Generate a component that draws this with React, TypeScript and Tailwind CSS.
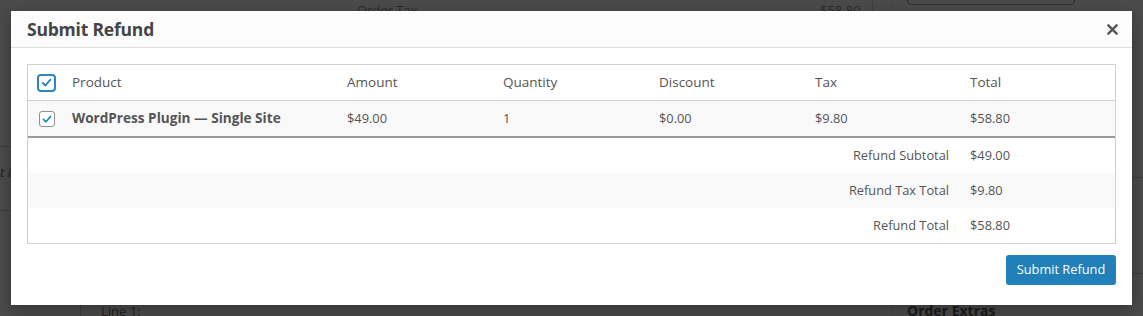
import React from "react";

const font = { fontFamily: '"Open Sans", "Noto Sans", sans-serif' };

function Check({ className }: { className?: string }) {
  return (
    <svg viewBox="0 0 20 20" className={className} fill="none">
      <path d="M5 10.5 L8.6 14 L15.2 6.2" stroke="currentColor" strokeWidth="2.4" strokeLinecap="round" strokeLinejoin="round" />
    </svg>
  );
}

export default function App() {
  const cols = ["Amount", "Quantity", "Discount", "Tax", "Total"];
  const vals = ["$49.00", "1", "$0.00", "$9.80", "$58.80"];
  const widths = ["w-[156px]", "w-[156px]", "w-[156px]", "w-[155px]", "flex-1"];
  return (
    <div className="relative w-[1143px] h-[316px] overflow-hidden bg-[#4b4b4b]" style={font}>
      {/* dimmed underlying page hints */}
      <div className="absolute left-[907px] top-[-10px] w-[168px] h-[15px] rounded-[4px] border border-[#2f2f2f]" />
      <div className="absolute left-[872px] top-0 w-px h-[22px] bg-[#3e3e3e]" />
      <div className="absolute left-[892px] top-0 w-px h-[316px] bg-[#454545]" />
      <div className="absolute left-0 top-[146px] w-[11px] h-px bg-[#3e3e3e]" />
      <div className="absolute left-0 top-[210px] w-[11px] h-px bg-[#3e3e3e]" />
      <div className="absolute left-[80px] top-[305px] w-px h-[11px] bg-[#3e3e3e]" />
      <div className="absolute left-[1132px] top-[177px] w-[11px] h-px bg-[#3e3e3e]" />
      <div className="absolute left-[1132px] top-[273px] w-[11px] h-px bg-[#3e3e3e]" />
      <div className="absolute left-[101px] top-[305px] text-[13px] leading-none text-[#1e1e1e]">Line 1:</div>
      <div className="absolute left-[907px] top-[304px] text-[14px] leading-none font-bold text-[#1a1a1a]">Order Extras</div>
      <div className="absolute left-0 top-[166px] text-[13px] leading-none italic text-[#1e1e1e]">t i</div>
      <div className="absolute left-[357px] top-[4px] text-[13px] text-[#2a2a2a] leading-none">Order Tax</div>
      <div className="absolute left-[820px] top-[4px] text-[13px] text-[#2a2a2a] leading-none">$58.80</div>

      {/* modal */}
      <div className="absolute left-[11px] top-[11px] w-[1121px] h-[294px] bg-white flex flex-col shadow-[0_5px_15px_rgba(0,0,0,0.3)]">
        <div className="h-[37px] bg-[#fcfcfc] border-b border-[#dddddd] flex items-center justify-between pl-[16px] pr-[14px]">
          <div className="text-[17.5px] font-bold text-[#444444] tracking-[-0.2px]">Submit Refund</div>
          <svg viewBox="0 0 12 12" className="w-[11px] h-[11px] text-[#555555]">
            <path d="M1.5 1.5 L10.5 10.5 M10.5 1.5 L1.5 10.5" stroke="currentColor" strokeWidth="2.6" strokeLinecap="round" />
          </svg>
        </div>
        <div className="px-[16px] pt-[16px] flex flex-col">
          <div className="border border-[#ccd0d4] text-[13.5px] text-[#555555]">
            <div className="flex h-[36px] items-center border-b border-[#ccd0d4] bg-white">
              <div className="w-[34px] pl-[9px] flex items-center">
                <div className="w-[19px] h-[18px] rounded-[4px] border-2 border-[#2b86c2] flex items-center justify-center text-[#2080c0]">
                  <Check className="w-[15px] h-[15px]" />
                </div>
              </div>
              <div className="w-[275px] px-[10px]">Product</div>
              {cols.map((c, i) => (
                <div key={c} className={`${widths[i]} px-[10px]`}>{c}</div>
              ))}
            </div>
            <div className="flex h-[37px] items-center border-b-2 border-[#9a9a9a] bg-[#f9f9f9] text-[12.8px]">
              <div className="w-[34px] pl-[11px] flex items-center">
                <div className="w-[16px] h-[16px] rounded-[3px] border border-[#8c8f94] bg-white flex items-center justify-center text-[#1e8cbe]">
                  <Check className="w-[14px] h-[14px]" />
                </div>
              </div>
              <div className="w-[275px] px-[10px] font-bold text-[13.6px]">WordPress Plugin — Single Site</div>
              {vals.map((v, i) => (
                <div key={i} className={`${widths[i]} px-[10px]`}>{v}</div>
              ))}
            </div>
            {[
              ["Refund Subtotal", "$49.00", "bg-white"],
              ["Refund Tax Total", "$9.80", "bg-[#f9f9f9]"],
              ["Refund Total", "$58.80", "bg-white"],
            ].map(([l, v, bg]) => (
              <div key={l} className={`flex h-[35px] items-center text-[12.8px] ${bg}`}>
                <div className="w-[932px] text-right pr-[11px]">{l}</div>
                <div className="flex-1 px-[10px]">{v}</div>
              </div>
            ))}
          </div>
          <div className="flex justify-end mt-[11px]">
            <button className="h-[30px] w-[110px] rounded-[3px] bg-[#2180b9] text-white text-[12.8px]">Submit Refund</button>
          </div>
        </div>
      </div>
    </div>
  );
}
